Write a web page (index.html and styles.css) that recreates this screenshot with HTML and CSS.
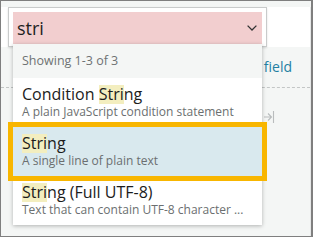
FILE: index.html
```html
<!DOCTYPE html>
<html lang="en">
<head>
<meta charset="utf-8">
<title>Field type picker</title>
<link rel="stylesheet" href="styles.css">
</head>
<body>
<div class="frame">
  <div class="panel">
    <div class="topband">
      <div class="combo">
        <div class="combo-input">
          <span class="query">stri</span>
          <svg class="chevron" width="10" height="6" viewBox="0 0 10 6"><path d="M0.6 0.6 L5 5 L9.4 0.6" fill="none" stroke="#333" stroke-width="1.3"/></svg>
        </div>
        <div class="listbox">
          <div class="list-header">Showing 1-3 of 3</div>
          <div class="option">
            <div class="opt-title">Condition <mark class="hl">Stri</mark>ng</div>
            <div class="opt-sub">A plain JavaScript condition statement</div>
          </div>
          <div class="option selected">
            <div class="opt-title"><mark class="hl">Stri</mark>ng</div>
            <div class="opt-sub">A single line of plain text</div>
          </div>
          <div class="option">
            <div class="opt-title"><mark class="hl">Stri</mark>ng (Full UTF-8)</div>
            <div class="opt-sub">Text that can contain UTF-8 character ...</div>
          </div>
        </div>
      </div>
    </div>
    <div class="link-row"><a class="link">New field</a></div>
    <div class="dashed"></div>
    <div class="icon-row">
      <svg width="12" height="14" viewBox="0 0 12 14"><path d="M1 7 H8 M5 3.5 L8.5 7 L5 10.5 M10.5 1 V13" fill="none" stroke="#b9bcbd" stroke-width="1.1"/></svg>
    </div>
  </div>
</div>
</body>
</html>
```

FILE: styles.css
```css
html, body {
  margin: 0;
  padding: 0;
}
body {
  font-family: "Open Sans", "Liberation Sans", sans-serif;
  width: 313px;
  height: 237px;
  overflow: hidden;
}
.frame {
  box-sizing: border-box;
  width: 313px;
  height: 237px;
  border: 1px solid #7f7f7f;
  border-right-width: 2px;
  background: #f4f6f5;
  padding-top: 6px;
}
.panel {
  width: 309px;
  height: 100%;
  border-right: 1px solid #e6e8e8;
}
.topband {
  height: 40px;
  background: #ffffff;
  padding-left: 7px;
}
.combo {
  position: relative;
  box-sizing: border-box;
  width: 259px;
  height: 40px;
  border: 1px solid #c9cbcb;
  background: #ffffff;
  box-shadow: 0 1px 2px rgba(0,0,0,0.12);
  padding: 4px 4px 2px 4px;
}
.combo-input {
  height: 32px;
  background: #f2cecf;
  display: flex;
  align-items: center;
  justify-content: space-between;
  padding: 0 5px 0 4px;
}
.query {
  font-size: 18px;
  color: #1f1f1f;
  line-height: 20px;
}
.chevron {
  display: block;
}
.listbox {
  position: absolute;
  left: 4px;
  top: 36px;
  width: 249px;
  background: #ffffff;
  box-shadow: 0 1px 4px rgba(0,0,0,0.28);
  z-index: 2;
}
.list-header {
  height: 34px;
  box-sizing: border-box;
  padding: 9px 9px 0;
  background: #f4f6f5;
  font-size: 12.5px;
  line-height: 16px;
  color: #6e7273;
}
.option {
  box-sizing: border-box;
  height: 49px;
  padding: 7px 9px 0;
}
.option.selected {
  background: #d9e9ee;
  outline: 5px solid #f8b600;
  position: relative;
}
.opt-title {
  font-size: 16px;
  line-height: 19px;
  color: #1c1c1c;
  white-space: nowrap;
}
.hl {
  display: inline-block;
  background: #f3eebf;
  color: inherit;
  line-height: 19px;
}
.opt-sub {
  font-size: 12px;
  line-height: 15px;
  color: #6b6f70;
  white-space: nowrap;
}
.link-row {
  height: 28px;
  display: flex;
  justify-content: flex-end;
  align-items: flex-end;
  padding-right: 18px;
}
.link {
  font-size: 14px;
  line-height: 17px;
  color: #237fa3;
}
.dashed {
  margin-top: 12px;
  border-top: 1px dashed #c3c6c6;
}
.icon-row {
  padding: 22px 0 0 262px;
}
.icon-row svg {
  display: block;
}
```
